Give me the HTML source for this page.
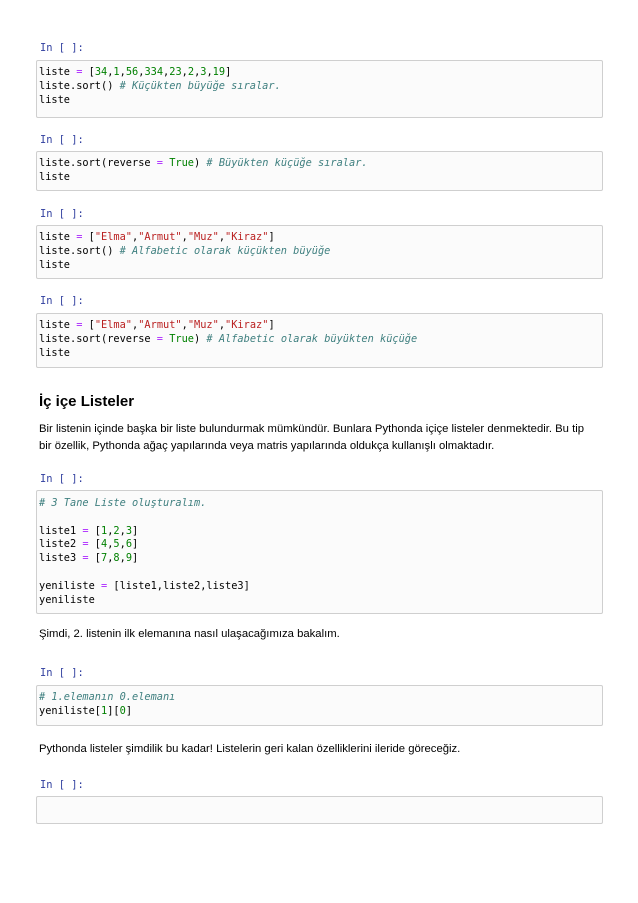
<!DOCTYPE html>
<html><head><meta charset="utf-8"><style>
body{margin:0;background:#fff;width:638px;height:903px;position:relative;overflow:hidden}
.in{position:absolute;left:40px;font:10.4px "DejaVu Sans Mono","Liberation Mono",monospace;color:#303F9F;line-height:14px}
.box{position:absolute;left:36px;width:565px;border:1px solid #cfcfcf;background:#fbfbfb;border-radius:2px}
.code{position:absolute;left:39px;font:10.3px "DejaVu Sans Mono","Liberation Mono",monospace;color:#000;line-height:13.8px;white-space:pre}
.n{color:#008000}.o{color:#AA22FF}.c{color:#408080;font-style:italic}.s{color:#BA2121}
.t{position:absolute;left:39px;font:11.3px "Liberation Sans",sans-serif;color:#000;line-height:17px;white-space:nowrap}
h2{position:absolute;left:39px;top:393px;margin:0;font:bold 15px "Liberation Sans",sans-serif;color:#000}
</style></head><body>
<div class="in" style="top:41px">In [ ]:</div>
<div class="box" style="top:60px;height:56px"></div>
<div class="code" style="top:66px">liste <span class="o">=</span> [<span class="n">34</span>,<span class="n">1</span>,<span class="n">56</span>,<span class="n">334</span>,<span class="n">23</span>,<span class="n">2</span>,<span class="n">3</span>,<span class="n">19</span>]
liste.sort() <span class="c"># Küçükten büyüğe sıralar.</span>
liste</div>

<div class="in" style="top:133px">In [ ]:</div>
<div class="box" style="top:151px;height:38px"></div>
<div class="code" style="top:157px">liste.sort(reverse <span class="o">=</span> <span class="n">True</span>) <span class="c"># Büyükten küçüğe sıralar.</span>
liste</div>

<div class="in" style="top:207px">In [ ]:</div>
<div class="box" style="top:225px;height:52px"></div>
<div class="code" style="top:231px">liste <span class="o">=</span> [<span class="s">"Elma"</span>,<span class="s">"Armut"</span>,<span class="s">"Muz"</span>,<span class="s">"Kiraz"</span>]
liste.sort() <span class="c"># Alfabetic olarak küçükten büyüğe</span>
liste</div>

<div class="in" style="top:294px">In [ ]:</div>
<div class="box" style="top:313px;height:53px"></div>
<div class="code" style="top:319px">liste <span class="o">=</span> [<span class="s">"Elma"</span>,<span class="s">"Armut"</span>,<span class="s">"Muz"</span>,<span class="s">"Kiraz"</span>]
liste.sort(reverse <span class="o">=</span> <span class="n">True</span>) <span class="c"># Alfabetic olarak büyükten küçüğe</span>
liste</div>

<h2>İç içe Listeler</h2>
<div class="t" style="top:421px">Bir listenin içinde başka bir liste bulundurmak mümkündür. Bunlara Pythonda içiçe listeler denmektedir. Bu tip<br>bir özellik, Pythonda ağaç yapılarında veya matris yapılarında oldukça kullanışlı olmaktadır.</div>

<div class="in" style="top:472px">In [ ]:</div>
<div class="box" style="top:490px;height:122px"></div>
<div class="code" style="top:497px"><span class="c"># 3 Tane Liste oluşturalım.</span>

liste1 <span class="o">=</span> [<span class="n">1</span>,<span class="n">2</span>,<span class="n">3</span>]
liste2 <span class="o">=</span> [<span class="n">4</span>,<span class="n">5</span>,<span class="n">6</span>]
liste3 <span class="o">=</span> [<span class="n">7</span>,<span class="n">8</span>,<span class="n">9</span>]

yeniliste <span class="o">=</span> [liste1,liste2,liste3]
yeniliste</div>

<div class="t" style="top:626px">Şimdi, 2. listenin ilk elemanına nasıl ulaşacağımıza bakalım.</div>

<div class="in" style="top:666px">In [ ]:</div>
<div class="box" style="top:685px;height:39px"></div>
<div class="code" style="top:691px"><span class="c"># 1.elemanın 0.elemanı</span>
yeniliste[<span class="n">1</span>][<span class="n">0</span>]</div>

<div class="t" style="top:741px">Pythonda listeler şimdilik bu kadar! Listelerin geri kalan özelliklerini ileride göreceğiz.</div>

<div class="in" style="top:778px">In [ ]:</div>
<div class="box" style="top:796px;height:26px"></div>
</body></html>
